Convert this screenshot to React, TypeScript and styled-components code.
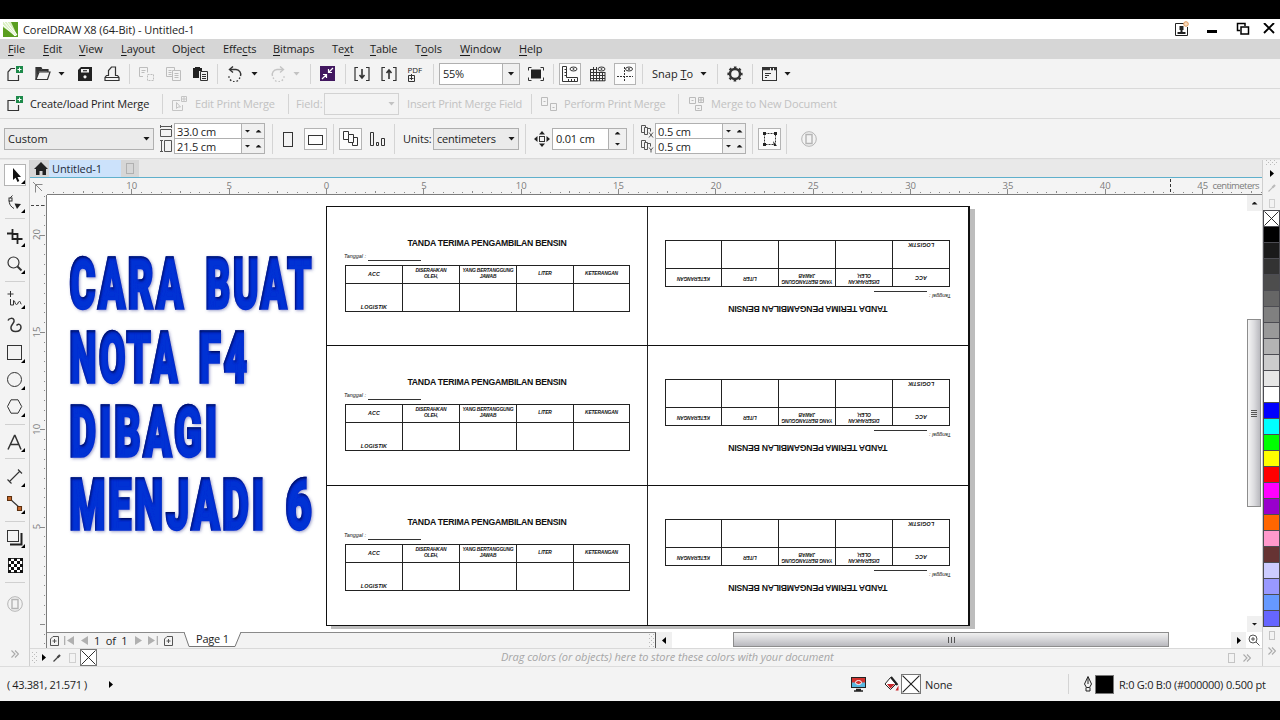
import React from "react";
import styled, { createGlobalStyle, css } from "styled-components";

const Global = createGlobalStyle`
  * { box-sizing: border-box; }
  body { margin: 0; background: #000; overflow: hidden; }
  svg { display: block; flex: none; }
`;

const UI_FONT = `"Open Sans", "Noto Sans", sans-serif`;
const INK = "#1c1c1c";
const FAINT = "#c2c2c2";

/* ---------- frame ---------- */

const Screen = styled.div`
  width: 1280px;
  height: 720px;
  padding: 19px 0;
  background: #000;
  font-family: ${UI_FONT};
  font-size: 11px;
  color: ${INK};
  display: flex;
  flex-direction: column;
`;

const TitleBar = styled.header`
  height: 20px;
  flex: none;
  background: #fff;
  display: flex;
  align-items: center;
  padding: 0 5px 0 3px;
`;

const MenuBar = styled.nav`
  height: 20px;
  flex: none;
  background: #d6d6d6;
  display: flex;
  align-items: center;
  padding-left: 8px;
`;

const Bar = styled.div<{ $h: number; $pl: number }>`
  height: ${(p) => p.$h}px;
  flex: none;
  background: #f3f3f3;
  border-bottom: 1px solid #d9d9d9;
  display: flex;
  align-items: center;
  padding-left: ${(p) => p.$pl}px;
`;

const Spacer = styled.div`
  flex: 1;
`;

const Slot = styled.div<{ $ml?: number; $w?: number }>`
  width: ${(p) => p.$w ?? 16}px;
  margin-left: ${(p) => p.$ml ?? 0}px;
  flex: none;
  display: flex;
  flex-direction: column;
  align-items: center;
  justify-content: center;
  gap: 1px;
`;

const Boxed = styled(Slot)`
  height: 22px;
  background: #fcfcfc;
  border: 1px solid #b4b4b4;
`;

const Divider = styled.i<{ $ml: number; $h?: number }>`
  width: 1px;
  height: ${(p) => p.$h ?? 20}px;
  margin-left: ${(p) => p.$ml}px;
  background: #d4d4d4;
  flex: none;
`;

const Label = styled.span<{ $ml?: number; $w?: number; $ls?: number; $dim?: boolean }>`
  width: ${(p) => (p.$w ? p.$w + "px" : "auto")};
  margin-left: ${(p) => p.$ml ?? 0}px;
  letter-spacing: ${(p) => p.$ls ?? 0}px;
  color: ${(p) => (p.$dim ? FAINT : "inherit")};
  flex: none;
  white-space: pre;
  line-height: 15px;
`;

const Caret = styled.i<{ $ml?: number; $dim?: boolean; $up?: boolean; $small?: boolean }>`
  width: ${(p) => (p.$small ? 6 : 7)}px;
  height: ${(p) => (p.$small ? 3 : 4)}px;
  flex: none;
  margin-left: ${(p) => p.$ml ?? 0}px;
  background: ${(p) => (p.$dim ? FAINT : "#1a1a1a")};
  clip-path: ${(p) => (p.$up ? "polygon(0 100%, 100% 100%, 50% 0)" : "polygon(0 0, 100% 0, 50% 100%)")};
`;

const Combo = styled.div<{ $w: number; $ml: number; $tone?: string; $dim?: boolean }>`
  width: ${(p) => p.$w}px;
  height: 22px;
  margin-left: ${(p) => p.$ml}px;
  flex: none;
  background: ${(p) => p.$tone ?? "#ebebeb"};
  border: 1px solid ${(p) => (p.$dim ? "#d2d2d2" : "#b0b0b0")};
  display: flex;
  align-items: center;
  justify-content: space-between;
  padding: 0 3px;
`;

const DropButton = styled.div<{ $w: number; $h?: number }>`
  width: ${(p) => p.$w}px;
  height: ${(p) => p.$h ?? 20}px;
  margin-right: -3px;
  border-left: 1px solid #b0b0b0;
  background: #f0f0f0;
  display: flex;
  flex-direction: column;
  align-items: center;
  justify-content: center;
  gap: 8px;
`;

const Spinner = styled.div<{ $ml: number }>`
  width: 91px;
  height: 31px;
  margin-left: ${(p) => p.$ml}px;
  flex: none;
  border: 1px solid #b0b0b0;
  background: #b0b0b0;
  display: grid;
  grid-template-rows: 14px 14px;
  row-gap: 1px;
`;

const SpinRow = styled.div`
  background: #fff;
  display: flex;
  align-items: center;
  padding-left: 2px;
  justify-content: space-between;
`;

const SpinKeys = styled.div`
  width: 23px;
  height: 14px;
  border-left: 1px solid #b0b0b0;
  background: #f0f0f0;
  display: flex;
  align-items: center;
  justify-content: space-around;
`;

/* ---------- workspace ---------- */

const Workspace = styled.div`
  height: 507px;
  flex: none;
  display: grid;
  grid-template-columns: 30px 1232px 18px;
  background: #f3f3f3;
  border-top: 1px solid #e6e6e6;
`;

const Toolbox = styled.aside`
  border-right: 1px solid #cfcfcf;
  padding-left: 4px;
`;

const Tool = styled.div<{ $mt: number; $active?: boolean; $flyout?: boolean }>`
  position: relative;
  width: 22px;
  height: ${(p) => (p.$active ? 22 : 20)}px;
  margin-top: ${(p) => p.$mt}px;
  display: flex;
  align-items: center;
  justify-content: center;
  ${(p) =>
    p.$active &&
    css`
      background: #fff;
      border: 1px solid #b4b4b4;
    `}
  ${(p) =>
    p.$flyout &&
    css`
      &::after {
        content: "";
        position: absolute;
        right: ${p.$active ? 0 : 1}px;
        bottom: ${p.$active ? 1 : 0}px;
        border-left: 4px solid transparent;
        border-bottom: 4px solid #000;
      }
    `}
`;

const ToolRule = styled.hr<{ $mt: number }>`
  width: 20px;
  height: 1px;
  border: 0;
  margin: ${(p) => p.$mt}px 0 0 1px;
  background: #d0d0d0;
`;

const Center = styled.main`
  display: flex;
  flex-direction: column;
`;

const TabRow = styled.div`
  height: 18px;
  flex: none;
  background: #e9e9e9;
  border-bottom: 1px solid #5fb0cc;
  display: flex;
  align-items: stretch;
`;

const HomeTab = styled.div`
  width: 19px;
  background: #d6d6d6;
  display: flex;
  align-items: center;
  justify-content: center;
  padding-left: 3px;
`;

const DocTab = styled.div`
  width: 72px;
  background: #cce2fb;
  padding-left: 3px;
  display: flex;
  align-items: center;
  color: #222a3a;
`;

const NewTab = styled.div`
  width: 18px;
  background: #d6d6d6;
  display: flex;
  align-items: center;
  justify-content: center;
`;

const Stage = styled.div`
  height: 453px;
  flex: none;
  display: flex;
`;

const StageColumn = styled.div`
  width: 1215px;
  display: flex;
  flex-direction: column;
`;

const CanvasRow = styled.div`
  height: 437px;
  display: flex;
`;

const Canvas = styled.div`
  position: relative;
  width: 1200px;
  height: 437px;
  background: #fff;
  overflow: hidden;
`;

const Artwork = styled.svg`
  position: absolute;
  left: 0;
  top: 0;
`;

const Sheet = styled.div`
  position: absolute;
  left: 279px;
  top: 11px;
  width: 644px;
  height: 420px;
  background: #fff;
  border: 1px solid #111;
  border-right-width: 2px;
  box-shadow: 5px 3px 0 0 #bdbdbd;
  display: grid;
  grid-template-columns: 321px 320px;
  grid-template-rows: 139px 140px 139px;
`;

const SlipCell = styled.div<{ $flip?: boolean; $last?: boolean }>`
  border-right: ${(p) => (p.$flip ? 0 : 1)}px solid #222;
  border-bottom: ${(p) => (p.$last ? 0 : 1)}px solid #111;
  display: flex;
`;

const Slip = styled.section<{ $flip?: boolean }>`
  width: 320px;
  height: 139px;
  flex: none;
  padding: 30px 0 0 18px;
  font-family: "Liberation Sans", Arial, sans-serif;
  color: #111;
  transform: ${(p) => (p.$flip ? "rotate(180deg) translate(0px, 1px)" : "none")};
`;

const SlipTitle = styled.h2`
  margin: 0;
  width: 284px;
  height: 12px;
  text-align: center;
  font-size: 8.7px;
  letter-spacing: -0.26px;
  font-weight: 700;
  line-height: 12px;
  white-space: nowrap;
`;

const SlipDate = styled.div`
  height: 16px;
  display: flex;
  align-items: flex-start;
  padding-top: 3px;
  gap: 2px;
  font-size: 5.4px;
  font-style: italic;
  line-height: 9px;
`;

const DateText = styled.span`
  width: 22px;
  margin-left: -1px;
  white-space: nowrap;
`;

const DateLine = styled.i`
  width: 53px;
  height: 9px;
  border-bottom: 1px solid #333;
`;

const SlipTable = styled.div`
  width: 285px;
  height: 47px;
  display: grid;
  grid-template-columns: repeat(4, 56px) 55px;
  grid-template-rows: 17px 27px;
  gap: 1px;
  padding: 1px;
  background: #222;
  font-size: 4.9px;
  font-weight: 700;
  font-style: italic;
  line-height: 6px;
  text-align: center;
`;

const SlipBox = styled.div<{ $foot?: boolean; $wide?: boolean }>`
  background: #fff;
  display: flex;
  flex-direction: column;
  align-items: center;
  justify-content: ${(p) => (p.$foot ? "flex-end" : "center")};
  padding-bottom: ${(p) => (p.$foot ? 1 : 1)}px;
  white-space: nowrap;
  font-size: ${(p) => (p.$wide ? 5.4 : 4.9)}px;
  letter-spacing: ${(p) => (p.$wide ? 0.1 : -0.16)}px;
`;

const VScroll = styled.div`
  width: 15px;
  background: #fff;
  display: flex;
  flex-direction: column;
`;

const ScrollKey = styled.div<{ $w: number; $h: number }>`
  width: ${(p) => p.$w}px;
  height: ${(p) => p.$h}px;
  flex: none;
  background: #f0f0f0;
  display: flex;
  align-items: center;
  justify-content: center;
`;

const VThumb = styled.div`
  width: 14px;
  height: 188px;
  margin: 108px 0 109px;
  flex: none;
  border: 1px solid #8d8d8d;
  background: linear-gradient(90deg, #f4f4f4, #dcdcdf 50%, #b9b9be);
  display: flex;
  align-items: center;
  justify-content: center;
`;

const HThumb = styled.div`
  width: 436px;
  height: 15px;
  margin: 0 62px 0 61px;
  flex: none;
  border: 1px solid #8d8d8d;
  background: linear-gradient(180deg, #f0f0f0, #d6d6d9 50%, #b9b9be);
  display: flex;
  align-items: center;
  justify-content: center;
`;

const PageRow = styled.div`
  height: 16px;
  display: flex;
  background: #fff;
`;

const PageBar = styled.div`
  width: 609px;
  flex: none;
  background: #f3f3f3;
  border-top: 1px solid #8a8a8a;
  border-right: 1px solid #555;
  display: flex;
  align-items: center;
  padding-left: 3px;
`;

const PageTab = styled.div`
  width: 58px;
  height: 16px;
  margin-left: 11px;
  position: relative;
  align-self: flex-start;
  svg {
    margin-top: -1px;
  }
  span {
    position: absolute;
    left: 12px;
    top: -2px;
  }
`;

const DocPalette = styled.div`
  height: 18px;
  flex: none;
  border-top: 1px solid #d9d9d9;
  display: flex;
  align-items: center;
  padding-left: 2px;
`;

const Hint = styled.div`
  margin-left: 404px;
  width: 334px;
  flex: none;
  font-style: italic;
  letter-spacing: -0.07px;
  line-height: 14px;
  margin-top: -2px;
  color: #a6a6a6;
  white-space: nowrap;
`;

const Palette = styled.aside`
  border-left: 1px solid #cfcfcf;
  display: flex;
  flex-direction: column;
  align-items: center;
`;

const PaletteTop = styled.div`
  height: 50px;
  flex: none;
  display: flex;
  flex-direction: column;
  align-items: center;
`;

const PaletteKeys = styled.div`
  display: flex;
  flex-direction: column;
  align-items: center;
  gap: 7px;
  padding-top: 4px;
`;

const Swatch = styled.div<{ $c: string }>`
  width: 17px;
  height: 16px;
  flex: none;
  background: ${(p) => p.$c};
  border: 1px solid #4c4c52;
  border-bottom: 0;
`;

const PaletteEnd = styled.div`
  height: 40px;
  border-top: 1px solid #4c4c52;
  width: 17px;
  display: flex;
  flex-direction: column;
  align-items: center;
  gap: 7px;
  padding-top: 4px;
`;

const StatusBar = styled.footer`
  height: 35px;
  flex: none;
  background: #f3f3f3;
  border-top: 1px solid #dcdcdc;
  display: flex;
  align-items: center;
  padding-left: 7px;
`;

const FillBox = styled.div<{ $ml: number; $s: number; $c: string }>`
  width: ${(p) => p.$s}px;
  height: ${(p) => p.$s}px;
  margin-left: ${(p) => p.$ml}px;
  flex: none;
  border: 1px solid #777;
  background: ${(p) => p.$c};
`;

/* ---------- icons ---------- */

type IconProps = { w?: number; h?: number; c?: string; sw?: number; fill?: string; children: React.ReactNode };
const Icon = ({ w = 16, h = 16, c = "#333", sw = 1.2, fill = "none", children }: IconProps) => (
  <svg width={w} height={h} viewBox={`0 0 ${w} ${h}`} fill={fill} stroke={c} strokeWidth={sw}>
    {children}
  </svg>
);

const GreenPlus = () => (
  <g stroke="none">
    <rect x="9" y="0" width="7" height="7" fill="#1d8a4a" />
    <path d="M12 1.500h1v1.500h1.500v1H13v1.500h-1V4h-1.500V3H12z" fill="#fff" />
  </g>
);

const CrossBox = ({ s }: { s: number }) => (
  <svg width={s} height={s} viewBox="0 0 16 16" stroke="#222" strokeWidth="1">
    <path d="M0.500 0.500 15.500 15.500M15.500 0.500 0.500 15.500" />
  </svg>
);

const PageGlyph = ({ c = "#c4c4c4", w = 7, h = 10 }) => (
  <svg width={w} height={h} fill="none" stroke={c}>
    <rect x="0.5" y="0.5" width={w - 1} height={h - 1} />
  </svg>
);

const Chevrons = () => (
  <Icon w={8} h={8} c="#aaa" sw={1.1}>
    <path d="M0.500 0.500 4 4 .5 7.500M4 .5 7.500 4 4 7.500" />
  </Icon>
);

const SideArrow = ({ left, c = "#000", w = 5, h = 7 }: { left?: boolean; c?: string; w?: number; h?: number }) => (
  <svg width={w} height={h} fill={c}>
    <path d={left ? `M${w} 0V${h}L0 ${h / 2}z` : `M0 0V${h}L${w} ${h / 2}z`} />
  </svg>
);

const Grip = ({ w, h }: { w: number; h: number }) => (
  <svg width={w} height={h} fill="#bbb">
    {Array.from({ length: Math.floor(w / 2) * Math.floor(h / 2) }, (_, i) => {
      const cols = Math.floor(w / 2);
      const x = i % cols;
      const y = Math.floor(i / cols);
      return (x + y) % 2 ? null : <rect key={i} x={x * 2} y={y * 2} width="1" height="1" />;
    })}
  </svg>
);

const Dropper = ({ c = "#444" }) => (
  <Icon w={8} h={8} c={c} sw={1.2}>
    <path d="M0.500 7.500 5 3" />
    <path d="M4.500 3.500 7 1" strokeWidth="2.200" />
  </Icon>
);

const SpacingGlyph = ({ axis }: { axis: "X" | "Y" }) => (
  <Icon w={14} h={14} c="#555" sw={1}>
    <path d="M4.500 8.500h-3v-7h4v2M4.500 3.500h3v7h-3zM7.500 4.500h3v3" />
    {axis === "X" ? <path d="m9 8.500 4 5M13 8.500l-4 5" /> : <path d="m9 8.500 2 2.500 2-2.500M11 11v2.500" />}
  </Icon>
);

const AddPage = () => (
  <Icon w={9} h={10} c="#555" sw={1}>
    <path d="M3 .5h5.500v9h-8V3zM4.500 3v4M2.500 5h4" />
  </Icon>
);

/* ---------- rulers ---------- */

const CM = 19.47;

const HRuler = () => {
  const zero = 297;
  const marks = Array.from({ length: 126 }, (_, i) => i - 28);
  return (
    <svg width="1232" height="17" fontFamily={UI_FONT} fontSize="9.500" fill="#7c7c7c">
      <rect width="1232" height="17" fill="#f4f4f4" />
      {marks.map((m) => {
        const x = Math.round(zero + (m * CM) / 2) - 1;
        if (x < 18 || x > 1231) return null;
        const long = m % 10 === 0;
        const mid = m % 5 === 0;
        return <rect key={m} x={x} y={long ? 11 : mid ? 13 : 14} width="1" height={long ? 5 : mid ? 2 : 1} fill="#8a8a8a" />;
      })}
      {[-10, -5, 0, 5, 10, 15, 20, 25, 30, 35, 40, 45].map((n) => (
        <text key={n} x={zero - 0.5 + n * CM} y="10.500" textAnchor="middle">
          {Math.abs(n)}
        </text>
      ))}
      <text x="1182.500" y="10.500" textLength="47">centimeters</text>
      <path d="M1140.500 1v15" stroke="#333" strokeDasharray="3 2" />
      <path d="M5.500 6.500h7M5.500 6.500v8M6 7l6 6M3 4l3 3" stroke="#888" fill="none" />
      <rect x="17" y="16" width="1215" height="1" fill="#7c7c7c" />
    </svg>
  );
};

const VRuler = () => {
  const zero = 429;
  const marks = Array.from({ length: 48 }, (_, i) => i - 2);
  return (
    <svg width="17" height="453" fontFamily={UI_FONT} fontSize="9.500" fill="#7c7c7c">
      <rect width="17" height="453" fill="#f4f4f4" />
      {marks.map((m) => {
        const y = Math.round(zero - (m * CM) / 2);
        if (y < 1) return null;
        const long = m % 10 === 0;
        return <rect key={m} y={y} x={long ? 10 : 14} height="1" width={long ? 5 : 1} fill="#8a8a8a" />;
      })}
      {[5, 10, 15, 20].map((n) => (
        <text key={n} transform={`translate(10 ${zero - n * CM}) rotate(-90)`} textAnchor="middle">
          {n}
        </text>
      ))}
      <path d="M1 10.500h15" stroke="#444" strokeDasharray="3 2" />
      <rect x="16" width="1" height="453" fill="#7c7c7c" />
    </svg>
  );
};

/* ---------- canvas content ---------- */

const HEADLINE: [string, number, number, number][] = [
  ["CARA", 70, 113, 310],
  ["BUAT", 206, 105, 310],
  ["NOTA", 70, 107, 384],
  ["F4", 199, 48, 384],
  ["DIBAGI", 70, 147, 457.5],
  ["MENJADI", 70, 194, 531],
  ["6", 286, 26, 531],
];

const SQUEEZE = 0.56;

const Headline = () => (
  <Artwork width="279" height="370" viewBox="47 195 279 370">
    <defs>
      <filter id="bevel" x="-10%" y="-10%" width="120%" height="130%">
        <feGaussianBlur in="SourceAlpha" stdDeviation="0.800" result="soft" />
        <feOffset in="soft" dx="1.200" dy="1.500" result="shift" />
        <feComposite in="SourceAlpha" in2="shift" operator="out" result="edge" />
        <feFlood floodColor="#000a5a" result="navy" />
        <feComposite in="navy" in2="edge" operator="in" result="inner" />
        <feGaussianBlur in="SourceAlpha" stdDeviation="1.500" result="wide" />
        <feOffset in="wide" dx="1" dy="1" result="drop" />
        <feFlood floodColor="#4a50a0" floodOpacity="0.550" />
        <feComposite in2="drop" operator="in" result="shadow" />
        <feMerge>
          <feMergeNode in="shadow" />
          <feMergeNode in="SourceGraphic" />
          <feMergeNode in="inner" />
        </feMerge>
      </filter>
    </defs>
    <g filter="url(#bevel)" fill="#0630d4" stroke="#0630d4" strokeWidth="3.600" fontFamily="Roboto, sans-serif" fontWeight="900" fontSize="69.500" letterSpacing="5">
      {HEADLINE.map(([word, x, w, y]) => (
        <text
          key={word}
          transform={`translate(${x - 0.5} ${y - 1.8}) scale(${SQUEEZE} 1)`}
          textLength={(w + 3.5) / SQUEEZE}
          lengthAdjust="spacingAndGlyphs"
        >
          {word}
        </text>
      ))}
    </g>
  </Artwork>
);

const COLUMNS = [["ACC"], ["DISERAHKAN", "OLEH,"], ["YANG BERTANGGUNG", "JAWAB"], ["LITER"], ["KETERANGAN"]];

const PaymentSlip = ({ flip }: { flip?: boolean }) => (
  <Slip $flip={flip}>
    <SlipTitle>TANDA TERIMA PENGAMBILAN BENSIN</SlipTitle>
    <SlipDate>
      <DateText>Tanggal :</DateText>
      <DateLine />
    </SlipDate>
    <SlipTable>
      {COLUMNS.map((lines, i) => (
        <SlipBox key={lines[0]} $wide={i === 0}>
          {lines.map((l) => (
            <span key={l}>{l}</span>
          ))}
        </SlipBox>
      ))}
      {COLUMNS.map((lines, i) => (
        <SlipBox key={lines[0]} $foot $wide>
          {i === 0 && <span>LOGISTIK</span>}
        </SlipBox>
      ))}
    </SlipTable>
  </Slip>
);

/* ---------- data ---------- */

const MENUS: [string, number, number][] = [
  ["File", 0, 35],
  ["Edit", 0, 36],
  ["View", 0, 42],
  ["Layout", 0, 51],
  ["Object", -1, 51],
  ["Effects", 4, 50],
  ["Bitmaps", 0, 59],
  ["Text", 2, 38],
  ["Table", 0, 45],
  ["Tools", 1, 45],
  ["Window", 0, 59],
  ["Help", 0, 40],
];

const MenuItem = styled.span<{ $w: number }>`
  width: ${(p) => p.$w}px;
  line-height: 14px;
  letter-spacing: -0.1px;
  u {
    text-underline-offset: 1.5px;
  }
`;

const SWATCHES = [
  "#000000", "#1a1a1a", "#333333", "#4d4d4d", "#666666", "#808080", "#999999", "#b3b3b3", "#cccccc", "#e6e6e6", "#ffffff",
  "#0000ff", "#00ffff", "#00ff00", "#ffff00", "#ff0000", "#ff00ff", "#9900cc", "#ff6600", "#ff99cc", "#663333",
  "#ccccff", "#9999ff", "#6699ff", "#6666ff",
];

const mnemonic = (word: string, at: number) =>
  at < 0 ? (
    word
  ) : (
    <>
      {word.slice(0, at)}
      <u>{word[at]}</u>
      {word.slice(at + 1)}
    </>
  );

/* ---------- bars ---------- */

const StandardBar = () => (
  <Bar $h={30} $pl={7}>
    <Slot>
      <Icon><path d="M8 2.500H4L1 6v8.500h10.500V9" /><GreenPlus /></Icon>
    </Slot>
    <Slot $ml={12}>
      <Icon><path d="M1 13.500v-12h5l1 2h6v2.500" /><path d="M1 13.500 4 6h11l-2.500 7.500z" /><path d="M1 2h5l1 2h6v1.500H4L1.500 12z" fill="#333" stroke="none" /></Icon>
    </Slot>
    <Caret $ml={7} />
    <Slot $ml={12}>
      <Icon><path d="M1 4l3-3h11v14H1z" fill="#222" stroke="none" /><rect x="4" y="3" width="8" height="3.500" fill="#f3f3f3" stroke="none" /><path d="M6 4.700h4" /><circle cx="8" cy="10.800" r="1.600" fill="#f3f3f3" stroke="none" /></Icon>
    </Slot>
    <Slot $ml={11}>
      <Icon><path d="M4.500 10V4.500l3-3.500h4v9M4.500 9.500H2.500L1 11.500v3h14v-3l-1.500-2h-2M1 11.500h14" /></Icon>
    </Slot>
    <Divider $ml={9} />
    <Slot $ml={9}>
      <Icon c="#bdbdbd" sw={1}><path d="M4 10.500H.5v-9h8v5M2.500 4.500h4M2.500 6.500h3" /><rect x="8.500" y="8.500" width="6" height="6" strokeDasharray="2 1" /></Icon>
    </Slot>
    <Slot $ml={11}>
      <Icon c="#bdbdbd" sw={1}><path d="M6 10.500H.5v-9h8V4M2.500 4.500h3M2.500 6.500h3M2.500 8.500h3" /><path d="M6.500 4.500h8v10h-8zM8.500 7.500h4M8.500 9.500h4M8.500 11.500h4" /></Icon>
    </Slot>
    <Slot $ml={11}>
      <Icon sw={1}><path d="M0 2h2V1h5v1h2v3H6v7H0z" fill="#222" stroke="none" /><path d="M7.500 5.500h7v9h-7zM9 8.500h4M9 10.500h4M9 12.500h4" /></Icon>
    </Slot>
    <Divider $ml={8} />
    <Slot $ml={9}>
      <Icon sw={1.400}><path d="M3 3.500h6a5 5 0 0 1 4.500 6.500" /><path d="M12.800 11.500A5.500 5.500 0 0 1 2 9.500" strokeDasharray="1.600 1.900" /><path d="M6 .5 2.500 3.500 6 6.500" /></Icon>
    </Slot>
    <Caret $ml={8} />
    <Slot $ml={12}>
      <Icon c="#c4c4c4" sw={1.400}><path d="M13 3.500H7A5 5 0 0 0 2.500 10" /><path d="M3.200 11.500A5.500 5.500 0 0 0 14 9.500" strokeDasharray="1.600 1.900" /><path d="M10 .5l3.500 3-3.500 3" /></Icon>
    </Slot>
    <Caret $ml={7} $dim />
    <Divider $ml={10} />
    <Slot $ml={8}>
      <Icon w={15} h={15} c="#fff"><rect width="15" height="15" fill="#41175f" stroke="none" /><path d="M13 2 9 6M8.500 3v3.500H12M2 13l4-4M3 8.500h3.500V12" /></Icon>
    </Slot>
    <Divider $ml={10} />
    <Slot $ml={8}>
      <Icon><path d="M4 1.500H1v13h3M12 1.500h3v13h-3" /><path d="M8 3v9M5.500 9 8 12l2.500-3" strokeWidth="1.600" /></Icon>
    </Slot>
    <Slot $ml={11}>
      <Icon><path d="M4 1.500H1v13h3M12 1.500h3v13h-3" /><path d="M8 13V4M5.500 7 8 4l2.500 3" strokeWidth="1.600" /></Icon>
    </Slot>
    <Slot $ml={10} $w={17}>
      <svg width="17" height="16" fontFamily={UI_FONT} fontSize="8" fill="#222">
        <text x="0.500" y="6.500">PDF</text>
        <path d="M1.500 9.500h6v6h-6zM4.500 8v6M2.500 12.500h4" fill="none" stroke="#333" />
      </svg>
    </Slot>
    <Divider $ml={9} />
    <Combo $w={81} $ml={5} $tone="#fff">
      <Label $ls={-0.3}>55%</Label>
      <DropButton $w={17}><Caret /></DropButton>
    </Combo>
    <Slot $ml={8}>
      <Icon sw={1}><rect x="3" y="3.500" width="10" height="9" fill="#222" stroke="none" /><path d="M.5 4.500v-3h3M12.500 1.500h3v3M15.500 11.500v3h-3M3.500 14.500h-3v-3" /></Icon>
    </Slot>
    <Divider $ml={9} />
    <Boxed $ml={5} $w={22}>
      <Icon sw={1}><path d="M.5.500h4v11h11v4H.5zM2.500 3.500h2M2.500 6.500h2M2.500 9.500h2M6.500 13v2M9.500 13v2M12.500 13v2" /><ellipse cx="11.500" cy="3" rx="3.500" ry="2" /><circle cx="11.500" cy="3" r="0.600" /></Icon>
    </Boxed>
    <Slot $ml={9}>
      <Icon sw={1}><path d="M.5 3v12M3.500 1v14M6.500 1v14M9.500 6v9M12.500 6v9M15 6v9M0 3.500h7M0 6.500h15M0 9.500h15M0 12.500h15M0 14.800h15" /><ellipse cx="11.500" cy="3" rx="3.500" ry="2" /><circle cx="11.500" cy="3" r="0.600" /></Icon>
    </Slot>
    <Boxed $ml={8} $w={22}>
      <Icon sw={1}><path d="M7.500 1v15M0 10.500h16" strokeDasharray="2 1" /><ellipse cx="12" cy="3" rx="3.500" ry="2" /><circle cx="12" cy="3" r="0.600" /></Icon>
    </Boxed>
    <Divider $ml={6} />
    <Label $ml={9} $w={41}>Snap <u>T</u>o</Label>
    <Caret $ml={7} />
    <Divider $ml={10} />
    <Slot $ml={9}>
      <Icon><circle cx="8" cy="8" r="5" strokeWidth="2.400" /><circle cx="8" cy="8" r="6.700" strokeWidth="1.800" strokeDasharray="2.600 2.660" strokeDashoffset="1.300" /></Icon>
    </Slot>
    <Divider $ml={9} />
    <Slot $ml={9}>
      <Icon sw={1}><rect x=".5" y="1.500" width="14" height="13" /><path d="M1 3h13" strokeWidth="2.500" strokeDasharray="7 1 2 1 3" /><path d="M3 7.500h6M3 9.500h4M3 11.500h2" /></Icon>
    </Slot>
    <Caret $ml={6} />
  </Bar>
);

const MergeBar = () => (
  <Bar $h={30} $pl={7}>
    <Slot><Icon><path d="M8 4.500H1v10h10.500V9" /><GreenPlus /></Icon></Slot>
    <Label $ml={7} $w={119} $ls={-0.17}>Create/load Print Merge</Label>
    <Divider $ml={13} />
    <Slot $ml={9}>
      <Icon c="#c4c4c4" sw={1}><path d="M8 4.500H.5v10h10V9M9.500.500h5v5h-5zM12 .5v5M9.500 3h5M4.500 6.500v6l1.500-1.500h2.500z" /></Icon>
    </Slot>
    <Label $ml={7} $w={81} $ls={-0.17} $dim>Edit Print Merge</Label>
    <Divider $ml={12} />
    <Label $ml={7} $w={27} $ls={-0.1} $dim>Field:</Label>
    <Combo $ml={1} $w={75} $tone="#f3f3f3" $dim>
      <span />
      <Caret $dim />
    </Combo>
    <Label $ml={8} $w={116} $ls={-0.19} $dim>Insert Print Merge Field</Label>
    <Divider $ml={8} />
    <Slot $ml={9}>
      <Icon c="#bbb" sw={1}><path d="M.5 1.500h6v8h-6zM9.500 7.500h6v7h-6zM2.500 5.500h2M11.500 11.500h2" /></Icon>
    </Slot>
    <Label $ml={7} $w={102} $ls={-0.2} $dim>Perform Print Merge</Label>
    <Divider $ml={12} />
    <Slot $ml={10}>
      <Icon c="#bbb" sw={1}><path d="M.5 1.500h6v6h-6zM9.500 1.500h5v5h-5zM6.500 9.500h6v5h-6zM2.500 4.500h2M9.500 4h5M12 1.500v5M8.500 12.500h2" /></Icon>
    </Slot>
    <Label $ml={6} $w={127} $ls={-0.13} $dim>Merge to New Document</Label>
  </Bar>
);

const DualSpin = ({ a, b, ml }: { a: string; b: string; ml: number }) => (
  <Spinner $ml={ml}>
    {[a, b].map((v, i) => (
      <SpinRow key={i}>
        <Label $ls={-0.15}>{v}</Label>
        <SpinKeys>
          <Caret $small />
          <Caret $small $up />
        </SpinKeys>
      </SpinRow>
    ))}
  </Spinner>
);

const PropertyBar = () => (
  <Bar $h={40} $pl={4}>
    <Combo $w={150} $ml={0}>
      <Label>Custom</Label>
      <Caret />
    </Combo>
    <Slot $ml={5} $w={14}>
      <Icon w={14} h={14} c="#555" sw={1}><path d="M1.500 5.500h11v7h-11zM1 2.500h12M1.500 1v3M12.500 1v3" /></Icon>
      <Icon w={14} h={14} c="#555" sw={1}><path d="M5.500 1.500h7v11h-7zM2.500 1v12M1 1.500h3M1 12.500h3" /></Icon>
    </Slot>
    <DualSpin ml={1} a="33.0 cm" b="21.5 cm" />
    <Divider $ml={7} $h={30} />
    <Slot $ml={7}><Icon sw={1}><rect x="3.500" y="1.500" width="9" height="14" /></Icon></Slot>
    <Boxed $ml={8} $w={23}><Icon sw={1}><rect x=".5" y="4.500" width="14" height="9" /></Icon></Boxed>
    <Divider $ml={6} $h={30} />
    <Boxed $ml={5} $w={23}>
      <Icon sw={1}><path d="M5 8.500H.5v-8h5v3M5.500 11.500v-8h5v8zM10.500 6.500h4v8h-5v-3" /></Icon>
    </Boxed>
    <Slot $ml={8}><Icon sw={1}><path d="M.5 1.500h3v13h-3zM6.500 11.500h2v3h-2zM11.500 7.500h3v7h-3z" /></Icon></Slot>
    <Divider $ml={8} $h={30} />
    <Label $ml={8} $w={29} $ls={-0.2}>Units:</Label>
    <Combo $ml={1} $w={86}>
      <Label $ls={-0.2}>centimeters</Label>
      <Caret />
    </Combo>
    <Divider $ml={6} $h={30} />
    <Slot $ml={8}>
      <Icon sw={1}><rect x="5.500" y="5.500" width="5" height="5" /><path d="M8 0 5 3.500h6zM8 16l-3-3.500h6zM0 8l3.500-3v6zM16 8l-3.500-3v6z" fill="#222" stroke="none" /></Icon>
    </Slot>
    <Combo $ml={2} $w={75} $tone="#fff">
      <Label $ls={-0.2}>0.01 cm</Label>
      <DropButton $w={18}>
        <Caret $small $up />
        <Caret $small />
      </DropButton>
    </Combo>
    <Divider $ml={6} $h={30} />
    <Slot $ml={6} $w={14}>
      <SpacingGlyph axis="X" />
      <SpacingGlyph axis="Y" />
    </Slot>
    <DualSpin ml={1} a="0.5 cm" b="0.5 cm" />
    <Divider $ml={6} $h={30} />
    <Boxed $ml={5} $w={23}>
      <Icon sw={1}><rect x="2.500" y="2.500" width="11" height="11" strokeDasharray="2 1" /><path d="M1 1h3v3H1zM12 1h3v3h-3zM1 12h3v3H1zM11 10l4 5h-3z" fill="#222" stroke="none" /></Icon>
    </Boxed>
    <Divider $ml={5} $h={30} />
    <Slot $ml={14}>
      <Icon c="#b4b4b4" sw={1}><circle cx="8" cy="8" r="7.300" /><path d="M5 3.500h6v9H5z" strokeWidth="1.400" /></Icon>
    </Slot>
  </Bar>
);

const Tools = () => (
  <Toolbox>
    <Tool $mt={4} $active $flyout>
      <Icon><path d="M6 1v12l2.600-2.300L10.500 15l1.800-.9L10.500 10H14z" fill="#111" stroke="none" /></Icon>
    </Tool>
    <Tool $mt={7} $flyout>
      <Icon sw={1.300}><path d="M5.500.500c-5 4-4 10 1.500 13" strokeWidth="1" /><rect x="2" y="3" width="3" height="3" fill="#f3f3f3" strokeWidth="1" /><path d="M7.500 8.500 14 9l-4 5z" fill="#222" stroke="none" /></Icon>
    </Tool>
    <ToolRule $mt={5} />
    <Tool $mt={8} $flyout>
      <Icon sw={1.800} c="#222"><path d="M5.500 0v10h10M0 4.500h5.500M10.500 15V5H5.500" /></Icon>
    </Tool>
    <Tool $mt={7} $flyout>
      <Icon><circle cx="6.500" cy="6.500" r="5.500" /><path d="m10.500 10.500 4 4" strokeWidth="1.900" /></Icon>
    </Tool>
    <ToolRule $mt={7} />
    <Tool $mt={7} $flyout>
      <Icon sw={1}><path d="M3.500 0v6M.5 3h6M3.500 8v6h3V9.500c2 0 1 4 3 4s1-3 3-3 0 2.500 2 2.500" /></Icon>
    </Tool>
    <Tool $mt={6}>
      <Icon sw={1.500}><path d="M1 3.500C2 1 6 .5 7 3s-2.500 4-3 7 1.500 4.500 4.500 4.500 5.500-1.500 5.500-4.500-3-3.500-4.500-1.500" /></Icon>
    </Tool>
    <Tool $mt={8} $flyout><Icon sw={1}><rect x=".5" y=".5" width="14" height="14" /></Icon></Tool>
    <Tool $mt={7} $flyout><Icon sw={1}><circle cx="7.500" cy="7.500" r="7" /></Icon></Tool>
    <Tool $mt={7} $flyout><Icon sw={1}><path d="M4 .8h7l3.700 6.700L11 14.200H4L.5 7.500z" /></Icon></Tool>
    <ToolRule $mt={7} />
    <Tool $mt={7} $flyout><Icon sw={1.500}><path d="M1 15.500 7.500 1.500h.5L14 15.500M3.500 10.500h8.500" /></Icon></Tool>
    <ToolRule $mt={6} />
    <Tool $mt={8} $flyout><Icon sw={1.100}><path d="M2 13 13 2M0.500 10.500l4 4M11 .5l4 4" /></Icon></Tool>
    <Tool $mt={7} $flyout>
      <Icon sw={1.100}><path d="m3 3 10 9" /><path d="M.5.500h4v4h-4zM10.500 10.500h4v4h-4z" fill="#c8682c" stroke="#5a3010" /></Icon>
    </Tool>
    <ToolRule $mt={7} />
    <Tool $mt={6} $flyout>
      <Icon sw={1}><path d="M3 14.500h11.500V3" strokeWidth="2" stroke="#222" /><rect x=".5" y=".5" width="11" height="11" fill="#f3f3f3" /></Icon>
    </Tool>
    <Tool $mt={7}>
      <Icon w={15} h={15} sw={1}>
        <rect x=".5" y=".5" width="14" height="14" fill="#fff" />
        {Array.from({ length: 25 }, (_, i) => {
          const x = i % 5;
          const y = Math.floor(i / 5);
          return (x + y) % 2 ? null : <rect key={i} x={x * 3} y={y * 3} width="3" height="3" fill="#111" stroke="none" />;
        })}
      </Icon>
    </Tool>
    <ToolRule $mt={7} />
    <Tool $mt={11}>
      <Icon c="#b4b4b4" sw={1}><circle cx="8" cy="8" r="7.300" /><path d="M5 3.500h6v9H5z" strokeWidth="1.400" /></Icon>
    </Tool>
    <Tool $mt={30}><Chevrons /></Tool>
  </Toolbox>
);

const App = () => (
  <Screen>
    <Global />
    <TitleBar>
      <svg width="15" height="15" viewBox="0 0 15 15">
        <rect width="15" height="15" fill="#5a9e1f" />
        <path d="M0 0h8l6 13-1 1L0 5z" fill="#d9efc0" />
        <path d="M1 0l12 14M4 0l10 13M0 3l12 11" stroke="#fff" strokeWidth="1" />
      </svg>
      <Label $ml={5} $w={172} $ls={-0.07}>CorelDRAW X8 (64-Bit) - Untitled-1</Label>
      <Spacer />
      <Icon w={16} h={16} c="#222" sw={1}>
        <path d="M10 2.500H1.500v12h12V6" />
        <path d="M5.500 5h4v4h-1v2h3v2h-8v-2h3V9h-1z" fill="#222" stroke="none" />
        <circle cx="12" cy="3" r="2.300" stroke="#e29a5a" fill="#f8dcc0" />
      </Icon>
      <Slot $ml={16} $w={12}><Icon w={12} h={14} sw={3} c="#000"><path d="M1 9.500h10" /></Icon></Slot>
      <Slot $ml={18} $w={14}>
        <Icon w={14} h={14} sw={1.500} c="#000"><path d="M4 8.500H1.500v-7H9V4" /><path d="M5 5h7.500v7H5z" /></Icon>
      </Slot>
      <Slot $ml={13} $w={12}><Icon w={12} h={12} sw={1.900} c="#000"><path d="m1 0 10 10M11 0 1 10" /></Icon></Slot>
    </TitleBar>
    <MenuBar>
      {MENUS.map(([word, at, w]) => (
        <MenuItem key={word} $w={w}>{mnemonic(word, at)}</MenuItem>
      ))}
    </MenuBar>
    <StandardBar />
    <MergeBar />
    <PropertyBar />
    <Workspace>
      <Tools />
      <Center>
        <TabRow>
          <HomeTab>
            <Icon w={14} h={14}><path d="M7 0 0 7h2v6h3.500V9h3v4H12V7h2z" fill="#222" stroke="none" /></Icon>
          </HomeTab>
          <DocTab><Label $ls={-0.1}>Untitled-1</Label></DocTab>
          <NewTab><PageGlyph c="#b0b0b0" w={8} h={11} /></NewTab>
        </TabRow>
        <HRuler />
        <Stage>
          <VRuler />
          <StageColumn>
            <CanvasRow>
              <Canvas>
                <Headline />
                <Sheet>
                  {[0, 1, 2].map((row) => (
                    <React.Fragment key={row}>
                      <SlipCell $last={row === 2}><PaymentSlip /></SlipCell>
                      <SlipCell $flip $last={row === 2}><PaymentSlip flip /></SlipCell>
                    </React.Fragment>
                  ))}
                </Sheet>
              </Canvas>
              <VScroll>
                <ScrollKey $w={15} $h={16}><Caret $small $up /></ScrollKey>
                <VThumb><Icon w={6} h={8} c="#555" sw={1}><path d="M0 1.500h6M0 3.500h6M0 5.500h6M0 7.500h6" /></Icon></VThumb>
                <ScrollKey $w={15} $h={16}><Caret $small /></ScrollKey>
              </VScroll>
            </CanvasRow>
            <PageRow>
              <PageBar>
                <Slot $w={9}><AddPage /></Slot>
                <Slot $ml={5} $w={11}><svg width="11" height="9" fill="#b0b0b0"><path d="M0 0h1.300v9H0zM10 0v9L3 4.500z" /></svg></Slot>
                <Slot $ml={5} $w={9}><SideArrow left w={7} h={9} c="#b0b0b0" /></Slot>
                <Label $ml={5} $w={36} $ls={-0.1}>1  of  1</Label>
                <Slot $ml={4} $w={8}><SideArrow w={7} h={9} c="#b0b0b0" /></Slot>
                <Slot $ml={6} $w={11}><svg width="11" height="9" fill="#b0b0b0"><path d="M8.700 0H10v9H8.700zM0 0v9l7-4.500z" /></svg></Slot>
                <Slot $ml={5} $w={9}><AddPage /></Slot>
                <PageTab>
                  <svg width="58" height="16">
                    <path d="M0 0 5 14.500H51L57 0" fill="#fff" stroke="#777" />
                  </svg>
                  <Label $ls={-0.2}>Page 1</Label>
                </PageTab>
                <Spacer />
                <Grip w={6} h={14} />
              </PageBar>
              <ScrollKey $w={16} $h={16}><SideArrow left w={4} /></ScrollKey>
              <HThumb><Icon w={8} h={6} c="#555" sw={1}><path d="M1.500 0v6M4.500 0v6M7.500 0v6" /></Icon></HThumb>
              <ScrollKey $w={15} $h={16}><SideArrow w={4} /></ScrollKey>
              <Slot $w={15}>
                <Icon w={12} h={12} c="#555" sw={1}><circle cx="5" cy="5" r="4" /><path d="m8 8 3.500 3.500M5 3v4M3 5h4" /></Icon>
              </Slot>
            </PageRow>
          </StageColumn>
        </Stage>
        <DocPalette>
          <Grip w={6} h={12} />
          <Slot $ml={3} $w={5}><SideArrow w={4} /></Slot>
          <Slot $ml={7} $w={8}><Dropper /></Slot>
          <Slot $ml={8} $w={7}><PageGlyph c="#d0d0d0" /></Slot>
          <FillBox $ml={4} $s={17} $c="#fff"><CrossBox s={15} /></FillBox>
          <Hint>Drag colors (or objects) here to store these colors with your document</Hint>
          <Slot $ml={393} $w={7}><PageGlyph /></Slot>
          <Slot $ml={8} $w={8}><Chevrons /></Slot>
        </DocPalette>
      </Center>
      <Palette>
        <PaletteTop>
          <Grip w={12} h={6} />
          <PaletteKeys>
            <SideArrow w={4} />
            <Dropper c="#bbb" />
            <PageGlyph c="#d0d0d0" w={6} h={9} />
          </PaletteKeys>
        </PaletteTop>
        <Swatch $c="#fff"><CrossBox s={15} /></Swatch>
        {SWATCHES.map((c) => (
          <Swatch key={c} $c={c} />
        ))}
        <PaletteEnd>
          <PageGlyph w={6} h={9} />
          <Chevrons />
        </PaletteEnd>
      </Palette>
    </Workspace>
    <StatusBar>
      <Label $w={81} $ls={-0.37}>( 43.381, 21.571 )</Label>
      <Slot $ml={20} $w={5}><SideArrow w={4} /></Slot>
      <Slot $ml={738}>
        <Icon w={16} h={16} c="#222" sw={1}>
          <rect x=".5" y="1.500" width="14" height="10" fill="#58b8e0" />
          <path d="M1 2h13v4.500H1z" fill="#d2322e" stroke="none" />
          <ellipse cx="7.500" cy="6.500" rx="3" ry="2" fill="#d2322e" stroke="#fff" />
          <path d="M5 13.500h5M3 15h9" strokeWidth="1.300" />
        </Icon>
      </Slot>
      <Slot $ml={17}>
        <Icon w={16} h={16} c="#222" sw={1}>
          <path d="M6.500 1.500 12 8l-5.500 5.500L1 8z" fill="#fff" />
          <path d="M3 8h8l-4.500 4.500z" fill="#c8262a" stroke="none" />
          <path d="M7 1 13.500 9" strokeWidth="2" />
          <path d="M14.500 9.500v5h-3z" fill="#c8262a" stroke="none" />
        </Icon>
      </Slot>
      <FillBox $ml={1} $s={20} $c="#fff"><CrossBox s={18} /></FillBox>
      <Label $ml={4} $w={28} $ls={-0.1}>None</Label>
      <Divider $ml={115} />
      <Slot $ml={14} $w={10}>
        <Icon w={10} h={16} c="#222" sw={1}><path d="M5 .5 1.500 8l2 3.500h3l2-3.500zM3 11.500v3.500h4v-3.500M5 1v7" /></Icon>
      </Slot>
      <FillBox $ml={2} $s={19} $c="#000" />
      <Label $ml={5} $w={107} $ls={-0.25}>R:0 G:0 B:0 (#000000)</Label>
      <Label $w={42} $ls={-0.25}>0.500 pt</Label>
    </StatusBar>
  </Screen>
);

export default App;
